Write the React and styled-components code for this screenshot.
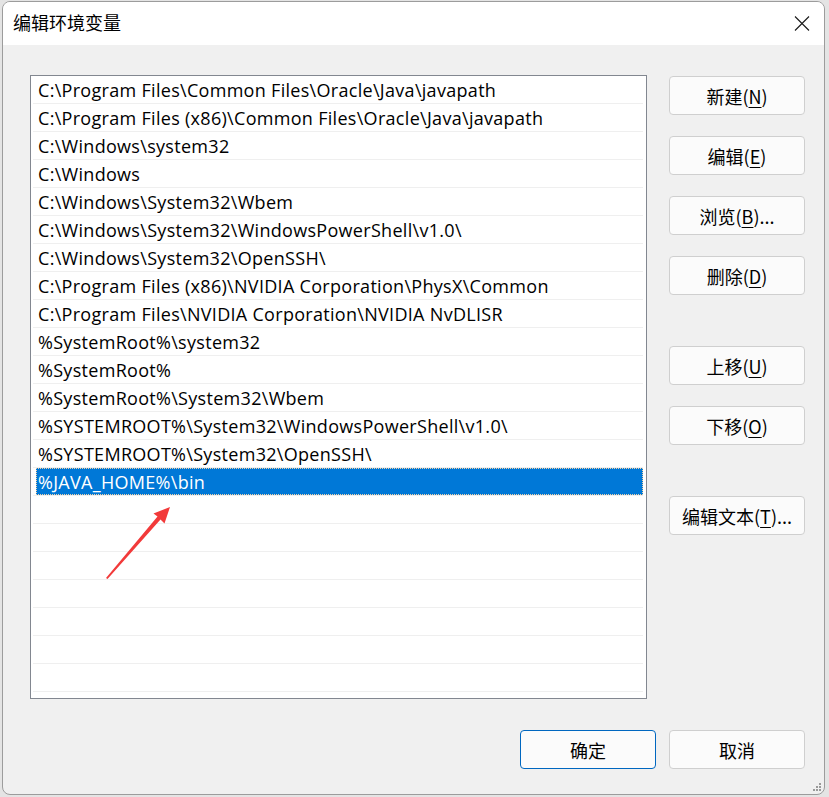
import React from "react";
import styled, { createGlobalStyle } from "styled-components";

const Global = createGlobalStyle`
  html, body { margin: 0; padding: 0; background: #e4e4e4; }
  body { font-family: "Open Sans", "Noto Sans CJK SC", sans-serif; }
`;

const Page = styled.div`
  position: relative;
  width: 829px;
  height: 797px;
  padding: 1px 4px 2px 2px;
  box-sizing: border-box;
`;

const Dialog = styled.div`
  position: relative;
  width: 823px;
  height: 794px;
  box-sizing: border-box;
  border: 1px solid #9c9c9c;
  border-radius: 8px;
  overflow: hidden;
  background: #f0f0f0;
  display: flex;
  flex-direction: column;
`;

const TitleBar = styled.div`
  height: 43px;
  flex: none;
  background: #ffffff;
  display: flex;
  align-items: center;
  justify-content: space-between;
  padding: 0 14px 0 10px;
`;

const Title = styled.div`
  font-family: "Noto Sans CJK SC", sans-serif;
  font-size: 18px;
  color: #000;
  line-height: 1;
  margin-top: -4px;
`;

const CloseButton = styled.div`
  width: 16px;
  height: 16px;
  display: flex;
  align-items: center;
  justify-content: center;
  margin-top: -1px;
`;

const Body = styled.div`
  flex: 1;
  display: flex;
  flex-direction: column;
  padding: 30px 19px 0 27px;
`;

const MainRow = styled.div`
  display: flex;
  gap: 22px;
  align-items: flex-start;
`;

const List = styled.div`
  width: 617px;
  height: 624px;
  box-sizing: border-box;
  border: 1px solid #828790;
  background: #ffffff;
  padding: 0 3px 0 2px;
  overflow: hidden;
`;

const Row = styled.div`
  height: 28px;
  box-sizing: border-box;
  border-bottom: 1px solid #efefef;
  display: flex;
  align-items: stretch;
`;

const Cell = styled.div`
  flex: 1;
  display: flex;
  align-items: center;
  box-sizing: border-box;
  margin-left: ${(p) => (p.$selected ? "3px" : "0")};
  padding-left: ${(p) => (p.$selected ? "2px" : "5px")};
  padding-top: 1px;
  background: ${(p) => (p.$selected ? "#0078d7" : "transparent")};
  color: ${(p) => (p.$selected ? "#ffffff" : "#000000")};
  outline: ${(p) => (p.$selected ? "1px dotted #f3d2a6" : "none")};
  outline-offset: -1px;
  font-family: "Open Sans", "Noto Sans CJK SC", sans-serif;
  font-size: 18px;
  white-space: nowrap;
  letter-spacing: 0.3px;
`;

const ButtonColumn = styled.div`
  display: flex;
  flex-direction: column;
  margin-top: 1px;
`;

const Button = styled.div`
  width: 136px;
  height: 39px;
  box-sizing: border-box;
  margin-top: ${(p) => p.$gap || 0}px;
  border: 1px solid ${(p) => (p.$primary ? "#0067c0" : "#cfcfcf")};
  border-radius: 4px;
  background: #fbfbfb;
  display: flex;
  align-items: center;
  justify-content: center;
  font-family: "Noto Sans CJK SC", sans-serif;
  font-size: 18px;
  color: #000;
  line-height: 1;
  u { text-decoration-thickness: 1px; text-underline-offset: 3px; }
`;

const Footer = styled.div`
  display: flex;
  justify-content: flex-end;
  gap: 13px;
  margin-top: 31px;
`;

const Grip = styled.svg`
  position: absolute;
  right: 2px;
  bottom: 2px;
`;

const Arrow = styled.svg`
  position: absolute;
  left: 0;
  top: 0;
  pointer-events: none;
`;

const items = [
  "C:\\Program Files\\Common Files\\Oracle\\Java\\javapath",
  "C:\\Program Files (x86)\\Common Files\\Oracle\\Java\\javapath",
  "C:\\Windows\\system32",
  "C:\\Windows",
  "C:\\Windows\\System32\\Wbem",
  "C:\\Windows\\System32\\WindowsPowerShell\\v1.0\\",
  "C:\\Windows\\System32\\OpenSSH\\",
  "C:\\Program Files (x86)\\NVIDIA Corporation\\PhysX\\Common",
  "C:\\Program Files\\NVIDIA Corporation\\NVIDIA NvDLISR",
  "%SystemRoot%\\system32",
  "%SystemRoot%",
  "%SystemRoot%\\System32\\Wbem",
  "%SYSTEMROOT%\\System32\\WindowsPowerShell\\v1.0\\",
  "%SYSTEMROOT%\\System32\\OpenSSH\\",
  "%JAVA_HOME%\\bin",
];

const rows = [...items, ...Array(8).fill("")];

const sideButtons = [
  { label: "新建(", key: "N", tail: ")", gap: 0 },
  { label: "编辑(", key: "E", tail: ")", gap: 21 },
  { label: "浏览(", key: "B", tail: ")...", gap: 21 },
  { label: "删除(", key: "D", tail: ")", gap: 21 },
  { label: "上移(", key: "U", tail: ")", gap: 51 },
  { label: "下移(", key: "O", tail: ")", gap: 21 },
  { label: "编辑文本(", key: "T", tail: ")...", gap: 51 },
];

export default function App() {
  return (
    <Page>
      <Global />
      <Dialog>
        <TitleBar>
          <Title>编辑环境变量</Title>
          <CloseButton>
            <svg width="16" height="15" viewBox="0 0 16 15">
              <path d="M1 0.5 L15 14.5 M15 0.5 L1 14.5" stroke="#1a1a1a" strokeWidth="1.1" fill="none" />
            </svg>
          </CloseButton>
        </TitleBar>
        <Body>
          <MainRow>
            <List>
              {rows.map((t, i) => (
                <Row key={i}>
                  <Cell $selected={i === 14}>{t}</Cell>
                </Row>
              ))}
            </List>
            <ButtonColumn>
              {sideButtons.map((b) => (
                <Button key={b.key} $gap={b.gap}>
                  {b.label}
                  <u>{b.key}</u>
                  {b.tail}
                </Button>
              ))}
            </ButtonColumn>
          </MainRow>
          <Footer>
            <Button $primary>确定</Button>
            <Button>取消</Button>
          </Footer>
        </Body>
        <Grip width="10" height="10" viewBox="0 0 10 10">
          <g fill="#9a9a9a">
            <rect x="7" y="1" width="2" height="2" />
            <rect x="4" y="4" width="2" height="2" />
            <rect x="7" y="4" width="2" height="2" />
            <rect x="1" y="7" width="2" height="2" />
            <rect x="4" y="7" width="2" height="2" />
            <rect x="7" y="7" width="2" height="2" />
          </g>
        </Grip>
      </Dialog>
      <Arrow width="829" height="797" viewBox="0 0 829 797">
        <polygon
          points="106,578 157.5,516.5 153.5,513.5 170,507 164.5,523.5 160.5,519.5 107.5,579"
          fill="#f23a3a"
        />
      </Arrow>
    </Page>
  );
}
